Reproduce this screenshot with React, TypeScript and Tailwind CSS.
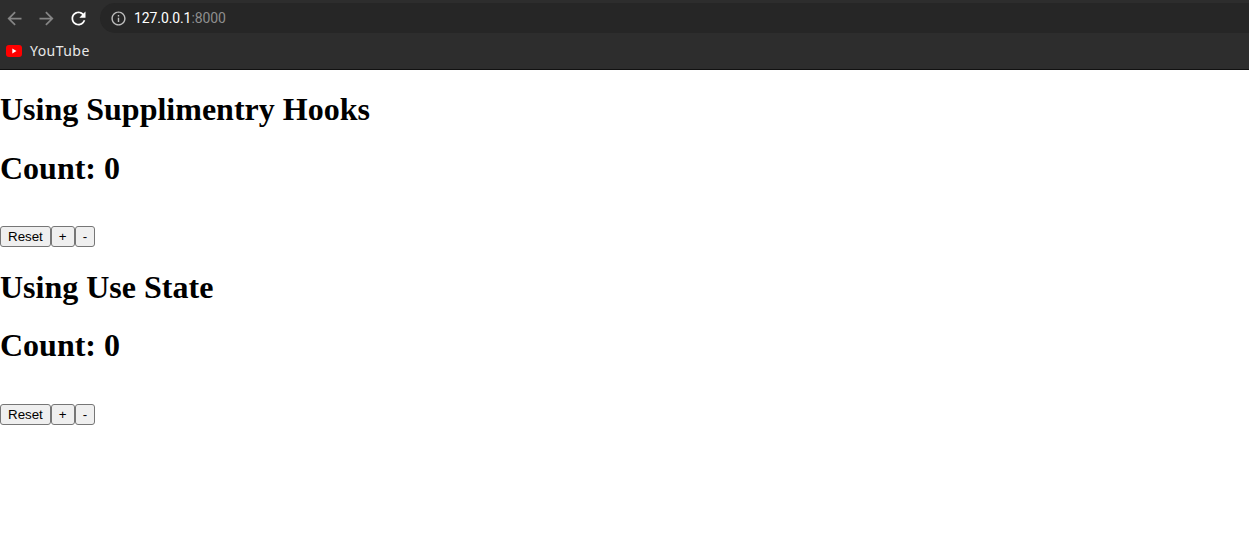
import React from "react";

function Btn({ children }: { children: React.ReactNode }) {
  return (
    <button className="h-[21px] px-[7px] bg-[#efefef] border border-[#767676] rounded-[3px] text-[13.33px] leading-[15px] text-black font-['Liberation_Sans',sans-serif]">
      {children}
    </button>
  );
}

function Section({ title }: { title: string }) {
  return (
    <div>
      <h1 className="text-[32px] font-bold leading-[37px] my-[21.44px]">{title}</h1>
      <h1 className="text-[32px] font-bold leading-[37px] my-[21.44px]">Count: 0</h1>
      <div className="h-[18px]" />
      <div className="flex h-[21px]">
        <Btn>Reset</Btn>
        <Btn>+</Btn>
        <Btn>-</Btn>
      </div>
    </div>
  );
}

export default function App() {
  return (
    <div className="min-h-[533px] bg-white font-['Liberation_Serif',serif] text-black overflow-hidden">
      <div className="h-[70px] bg-[#2d2d2d] border-b border-[#111] flex flex-col font-['Noto_Sans',sans-serif]">
        <div className="h-[36px] flex items-center">
          <div className="flex items-center w-[94px] shrink-0 pl-[3.5px] gap-[11px]">
            <svg width="21" height="21" viewBox="0 0 24 24" fill="#858585">
              <path d="M20 11H7.83l5.59-5.59L12 4l-8 8 8 8 1.41-1.41L7.83 13H20v-2z" />
            </svg>
            <svg width="21" height="21" viewBox="0 0 24 24" fill="#858585">
              <path d="M12 4l-1.41 1.41L16.17 11H4v2h12.17l-5.58 5.59L12 20l8-8z" />
            </svg>
            <svg width="21" height="21" viewBox="0 0 24 24" fill="#ffffff">
              <path d="M17.65 6.35C16.2 4.9 14.21 4 12 4c-4.42 0-7.99 3.58-7.99 8s3.57 8 7.99 8c3.73 0 6.84-2.55 7.73-6h-2.08c-.82 2.33-3.04 4-5.65 4-3.31 0-6-2.69-6-6s2.69-6 6-6c1.66 0 3.14.69 4.22 1.78L13 11h7V4l-2.35 2.35z" />
            </svg>
          </div>
          <div className="flex-1 h-[30px] ml-[6px] bg-[#262626] rounded-l-[15px] flex items-center pl-[10px]">
            <svg width="17" height="17" viewBox="0 0 24 24" fill="#bdbdbd">
              <path d="M11 7h2v2h-2zm0 4h2v6h-2zm1-9C6.48 2 2 6.48 2 12s4.48 10 10 10 10-4.48 10-10S17.52 2 12 2zm0 18c-4.41 0-8-3.59-8-8s3.59-8 8-8 8 3.59 8 8-3.59 8-8 8z" />
            </svg>
            <span className="ml-[7px] text-[14px] font-['Roboto',sans-serif] tracking-[-0.1px] text-white">
              127.0.0.1<span className="text-[#8e8e8e]">:8000</span>
            </span>
          </div>
        </div>
        <div className="flex-1 flex items-center pl-[6px] pb-[3px]">
          <svg width="16" height="12" viewBox="0 0 16 12">
            <rect width="16" height="12" rx="3" fill="#ff0000" />
            <path d="M6.3 3.6v4.8L10.5 6z" fill="#ffffff" />
          </svg>
          <span className="ml-[8px] -mt-[2px] text-[14px] tracking-[0.45px] text-[#e8e8e8]">YouTube</span>
        </div>
      </div>
      <Section title="Using Supplimentry Hooks" />
      <Section title="Using Use State" />
    </div>
  );
}
